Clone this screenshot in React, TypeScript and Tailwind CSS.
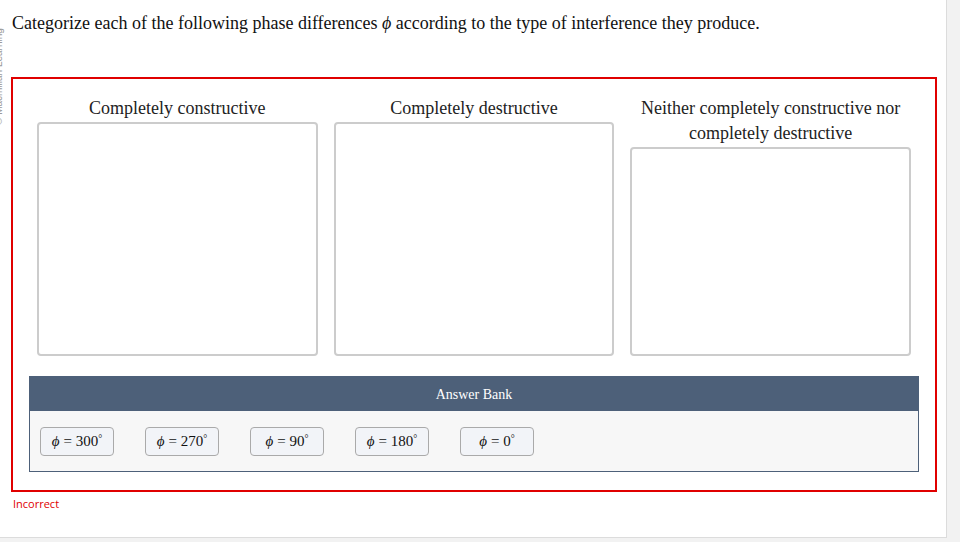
import React from 'react';

const serif = { fontFamily: '"Liberation Serif", "Times New Roman", serif' };

const columns = [
  { title: 'Completely constructive' },
  { title: 'Completely destructive' },
  { title: 'Neither completely constructive nor completely destructive' },
];

const answers = ['300', '270', '90', '180', '0'];

const Chip: React.FC<{ deg: string }> = ({ deg }) => (
  <div className="w-[74px] h-[29px] flex items-center justify-center rounded-[4px] border border-[#aaaaaa] bg-[#f2f4f8] text-[15px] text-[#111]">
    <span className="italic">ϕ</span>
    <span className="ml-[4px]">=</span>
    <span className="ml-[4px]">
      {deg}
      <span className="text-[10px] relative -top-[4px]">°</span>
    </span>
  </div>
);

export default function App() {
  return (
    <div className="w-[960px] h-[542px] bg-[#f2f2f2] overflow-hidden" style={serif}>
      <div className="relative w-[947px] h-[538px] bg-white border-r border-b border-[#dcdcdc] pl-[11px] pt-[11px]">
        {/* copyright stamp on the left edge */}
        <span
          className="absolute left-[-6px] top-[0px] origin-bottom-left text-[10px] text-[#9a9a9a] whitespace-nowrap"
          style={{ fontFamily: '"Liberation Sans", Arial, sans-serif', transform: 'translate(12px, 110px) rotate(-90deg)' }}
        >
          © Macmillan Learning
        </span>

        <p className="ml-px text-[18px] leading-[25px] text-[#111]">
          Categorize each of the following phase differences <span className="italic">ϕ</span> according to the type of
          interference they produce.
        </p>

        <div className="mt-[41px] w-[926px] border-2 border-[#e00000] px-4 pt-[17px] pb-[18px]">
          <div className="grid grid-cols-3 gap-4 px-2">
            {columns.map((col) => (
              <div key={col.title} className="flex flex-col">
                <div className="text-center text-[18px] leading-[25px] text-[#222] px-2">{col.title}</div>
                <div className="flex-1 mt-[1px] rounded-[4px] border-2 border-[#cccccc] bg-white min-h-[209px]" />
              </div>
            ))}
          </div>

          <div className="mt-[20px] border border-[#4d6079]">
            <div className="h-[34px] bg-[#4d6079] flex items-center justify-center text-white text-[14px]">Answer Bank</div>
            <div className="bg-[#f7f7f7] flex gap-[31px] pl-[10px] pt-[16px] pb-[15px]">
              {answers.map((a) => (
                <Chip key={a} deg={a} />
              ))}
            </div>
          </div>
        </div>

        <div
          className="mt-[5px] ml-[2px] text-[11px] leading-[14px] text-[#e00000]"
          style={{ fontFamily: '"Open Sans", "Liberation Sans", sans-serif' }}
        >
          Incorrect
        </div>
      </div>
    </div>
  );
}
